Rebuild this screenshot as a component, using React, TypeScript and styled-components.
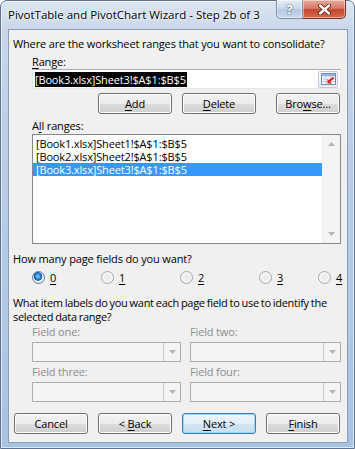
import React from 'react';
import styled, { createGlobalStyle } from 'styled-components';

const GlobalStyle = createGlobalStyle`
  html, body {
    margin: 0;
    padding: 0;
    background: #ffffff;
  }
  body {
    font-family: "Open Sans", "Noto Sans", sans-serif;
    font-size: 11px;
    letter-spacing: -0.15px;
    color: #000000;
  }
`;

const Window = styled.div`
  position: relative;
  width: 355px;
  height: 449px;
  box-sizing: border-box;
  display: flex;
  flex-direction: column;
  border: 1px solid #5d7391;
  border-radius: 7px 7px 0 0;
  background: linear-gradient(180deg, #dbe5f1 0px, #c8d7ea 28px, #bccfe8 120px, #a9c2e4 449px);
  box-shadow: inset 0 0 0 1px rgba(255, 255, 255, 0.6);
`;

const TitleBar = styled.div`
  height: 28px;
  display: flex;
  align-items: center;
  padding-left: 7px;
`;

const Title = styled.div`
  flex: 1;
  font-size: 11.5px;
  letter-spacing: 0;
  line-height: 16px;
  color: #000000;
  text-shadow: 0 0 6px #ffffff, 0 0 3px #ffffff;
  white-space: nowrap;
`;

const Caption = styled.div`
  align-self: flex-start;
  display: flex;
  margin-right: 8px;
  margin-top: -1px;
`;

const CaptionButton = styled.div<{ $close?: boolean }>`
  height: 19px;
  width: ${p => (p.$close ? '43px' : '27px')};
  box-sizing: border-box;
  display: flex;
  align-items: center;
  justify-content: center;
  border: 1px solid ${p => (p.$close ? '#7a2a1f' : '#7d8ea6')};
  border-top: none;
  border-left: ${p => (p.$close ? 'none' : undefined)};
  border-radius: ${p => (p.$close ? '0 0 5px 0' : '0 0 0 5px')};
  background: ${p =>
    p.$close
      ? 'linear-gradient(180deg, #e9a99b 0%, #d47c6b 45%, #c3452c 55%, #d96c4e 100%)'
      : 'linear-gradient(180deg, #e4ecf6 0%, #ccdaeb 45%, #b5c8df 55%, #c9d9ec 100%)'};
  box-shadow: inset 0 0 0 1px rgba(255, 255, 255, 0.45);
`;

const Client = styled.div`
  flex: 1;
  margin: 0 6px 5px 7px;
  border: 1px solid #8d9db3;
  background: #f0f0f0;
  padding: 6px 6px 0 4px;
  display: flex;
  flex-direction: column;
`;

const Text = styled.div<{ $indent?: boolean; $top?: number }>`
  line-height: 15px;
  margin-top: ${p => p.$top ?? 0}px;
  padding-left: ${p => (p.$indent ? '19px' : '0')};
  white-space: nowrap;
`;

const Para = styled.div`
  margin-top: 11px;
  line-height: 14px;
  letter-spacing: -0.3px;
  word-spacing: -0.5px;
  white-space: nowrap;
`;

const Indent = styled.div`
  padding-left: 19px;
`;

const RangeInput = styled.div`
  height: 20px;
  box-sizing: border-box;
  display: flex;
  align-items: center;
  background: #ffffff;
  border: 1px solid #abadb3;
  border-color: #abadb3 #e3e9ef #e3e9ef #e2e3ea;
  padding: 0 2px;
`;

const Selected = styled.span`
  background: #000000;
  color: #ffffff;
  line-height: 15px;
  padding-right: 1px;
`;

const RefButton = styled.div`
  margin-left: auto;
  width: 18px;
  height: 15px;
  display: flex;
  align-items: center;
  justify-content: center;
  border: 1px solid #c5cad4;
  border-radius: 2px;
  background: linear-gradient(180deg, #fafbfd, #e8edf5);
`;

const ButtonRow = styled.div`
  display: flex;
  margin-top: 4px;
`;

const Button = styled.div<{ $width?: number; $default?: boolean; $gap?: number }>`
  width: ${p => p.$width ?? 74}px;
  height: 21px;
  margin-left: ${p => p.$gap ?? 0}px;
  box-sizing: border-box;
  display: flex;
  align-items: center;
  justify-content: center;
  border: 1px solid ${p => (p.$default ? '#3c7fb1' : '#707070')};
  border-radius: 3px;
  background: ${p =>
    p.$default
      ? 'linear-gradient(180deg, #eef6fb 0%, #e3eff8 50%, #d3e6f3 50%, #c8dfef 100%)'
      : 'linear-gradient(180deg, #f2f2f2 0%, #ebebeb 50%, #dddddd 50%, #cfcfcf 100%)'};
  box-shadow: inset 0 0 0 1px ${p => (p.$default ? '#9bd4f5' : '#fcfcfc')};
  line-height: 15px;
  white-space: pre;
`;

const Key = styled.span`
  text-decoration: underline;
  text-underline-offset: 2px;
`;

const ListBox = styled.div`
  margin-top: 1px;
  height: 110px;
  box-sizing: border-box;
  display: flex;
  background: #ffffff;
  border: 1px solid #828790;
`;

const Items = styled.div`
  flex: 1;
  padding-top: 2px;
`;

const Item = styled.div<{ $selected?: boolean }>`
  line-height: 13px;
  height: 13px;
  padding-left: 3px;
  background: ${p => (p.$selected ? '#3399ff' : 'transparent')};
  color: ${p => (p.$selected ? '#ffffff' : '#000000')};
  white-space: nowrap;
`;

const ScrollBar = styled.div`
  width: 17px;
  display: flex;
  flex-direction: column;
  justify-content: space-between;
  align-items: center;
  background: #f4f4f4;
  border-left: 1px solid #f0f0f0;
  padding: 7px 0;
`;

const RadioRow = styled.div`
  margin-top: 4px;
  display: grid;
  grid-template-columns: 69px 79px 79px 59px auto;
  height: 15px;
  align-items: center;
`;

const RadioItem = styled.div`
  display: flex;
  align-items: center;
  gap: 5px;
  line-height: 15px;
`;

const RadioDot = styled.span<{ $checked?: boolean }>`
  width: 13px;
  height: 13px;
  box-sizing: border-box;
  border-radius: 50%;
  border: 1px solid ${p => (p.$checked ? '#5b7da3' : '#a7a7a7')};
  background: ${p =>
    p.$checked
      ? 'radial-gradient(circle at 45% 40%, #8fd3ff 0, #2e8ad8 2.5px, #1c5a9c 4px, #e6eef7 4.6px, #f4f6f9 100%)'
      : 'radial-gradient(circle at 50% 50%, #e8e8e8 0, #f2f2f2 4px, #fbfbfb 100%)'};
`;

const FieldGrid = styled.div<{ $top: number }>`
  margin-top: ${p => p.$top}px;
  display: grid;
  grid-template-columns: 149px 151px;
  column-gap: 9px;
`;

const FieldLabel = styled.div`
  line-height: 14px;
  color: #8d8d8d;
`;

const Combo = styled.div`
  margin-top: 3px;
  height: 20px;
  box-sizing: border-box;
  display: flex;
  justify-content: flex-end;
  background: #f4f4f4;
  border: 1px solid #adadad;
`;

const ComboArrow = styled.div`
  width: 16px;
  display: flex;
  align-items: center;
  justify-content: center;
  border-left: 1px solid #c8c8c8;
`;

const Footer = styled.div`
  margin-top: 11px;
  margin-left: 1px;
  display: grid;
  grid-template-columns: repeat(4, 74px);
  column-gap: 10px;
`;

const Arrow = ({ down }: { down?: boolean }) => (
  <svg width="7" height="4" viewBox="0 0 7 4">
    <path d={down ? 'M0 0 L7 0 L3.5 4 Z' : 'M0 4 L7 4 L3.5 0 Z'} fill="#b4b4b4" />
  </svg>
);

const RangeIcon = () => (
  <svg width="15" height="12" viewBox="0 0 15 12">
    <rect x="0.5" y="0.5" width="14" height="11" fill="#ffffff" stroke="#6f8fb7" />
    <rect x="1" y="1" width="13" height="2.5" fill="#9db7d9" />
    <path d="M1 6 H14 M1 8.5 H14 M5 3.5 V11 M9.5 3.5 V11" stroke="#b8c8dd" strokeWidth="1" />
    <path d="M6.5 6 L6.5 10.5 L11 10.5 Z" fill="#d8262a" />
    <path d="M12.5 4.5 L8 8.5" stroke="#d8262a" strokeWidth="2.2" />
  </svg>
);

const HelpGlyph = styled.span`
  color: #ffffff;
  font-weight: 700;
  font-size: 13px;
  text-shadow: 0 0 2px #41536b, 0 0 1px #41536b;
`;

const CloseGlyph = () => (
  <svg width="13" height="11" viewBox="0 0 13 11">
    <path d="M2 1.5 L11 9.5 M11 1.5 L2 9.5" stroke="#4b1a12" strokeWidth="4" strokeLinecap="round" />
    <path d="M2 1.5 L11 9.5 M11 1.5 L2 9.5" stroke="#ffffff" strokeWidth="2.4" strokeLinecap="round" />
  </svg>
);

const ranges = [
  '[Book1.xlsx]Sheet1!$A$1:$B$5',
  '[Book2.xlsx]Sheet2!$A$1:$B$5',
  '[Book3.xlsx]Sheet3!$A$1:$B$5',
];

const pageCounts = ['0', '1', '2', '3', '4'];

const fields = [
  ['Field one:', 'Field two:'],
  ['Field three:', 'Field four:'],
];

const App = () => (
  <>
    <GlobalStyle />
    <Window>
      <TitleBar>
        <Title>PivotTable and PivotChart Wizard - Step 2b of 3</Title>
        <Caption>
          <CaptionButton><HelpGlyph>?</HelpGlyph></CaptionButton>
          <CaptionButton $close><CloseGlyph /></CaptionButton>
        </Caption>
      </TitleBar>
      <Client>
        <Text>Where are the worksheet ranges that you want to consolidate?</Text>
        <Text $indent $top={3}><Key>R</Key>ange:</Text>
        <Indent>
          <RangeInput>
            <Selected>[Book3.xlsx]Sheet3!$A$1:$B$5</Selected>
            <RefButton><RangeIcon /></RefButton>
          </RangeInput>
          <ButtonRow>
            <Button $gap={66}><Key>A</Key>dd</Button>
            <Button $gap={10}><Key>D</Key>elete</Button>
            <Button $gap={20} $width={64}>Bro<Key>w</Key>se...</Button>
          </ButtonRow>
        </Indent>
        <Text $indent $top={4}>A<Key>l</Key>l ranges:</Text>
        <Indent>
          <ListBox>
            <Items>
              {ranges.map((r, i) => (
                <Item key={r} $selected={i === ranges.length - 1}>{r}</Item>
              ))}
            </Items>
            <ScrollBar>
              <Arrow />
              <Arrow down />
            </ScrollBar>
          </ListBox>
        </Indent>
        <Text $top={7}>How many page fields do you want?</Text>
        <Indent>
          <RadioRow>
            {pageCounts.map((n, i) => (
              <RadioItem key={n}>
                <RadioDot $checked={i === 0} />
                <Key>{n}</Key>
              </RadioItem>
            ))}
          </RadioRow>
        </Indent>
        <Para>
          What item labels do you want each page field to use to identify the
          <br />
          selected data range?
        </Para>
        <Indent>
          {fields.map((row, r) => (
            <FieldGrid key={r} $top={r === 0 ? 1 : 3}>
              {row.map(label => (
                <div key={label}>
                  <FieldLabel>{label}</FieldLabel>
                  <Combo>
                    <ComboArrow><Arrow down /></ComboArrow>
                  </Combo>
                </div>
              ))}
            </FieldGrid>
          ))}
        </Indent>
        <Footer>
          <Button>Cancel</Button>
          <Button>{'< '}<Key>B</Key>ack</Button>
          <Button $default><Key>N</Key>{'ext >'}</Button>
          <Button><Key>F</Key>inish</Button>
        </Footer>
      </Client>
    </Window>
  </>
);

export default App;
